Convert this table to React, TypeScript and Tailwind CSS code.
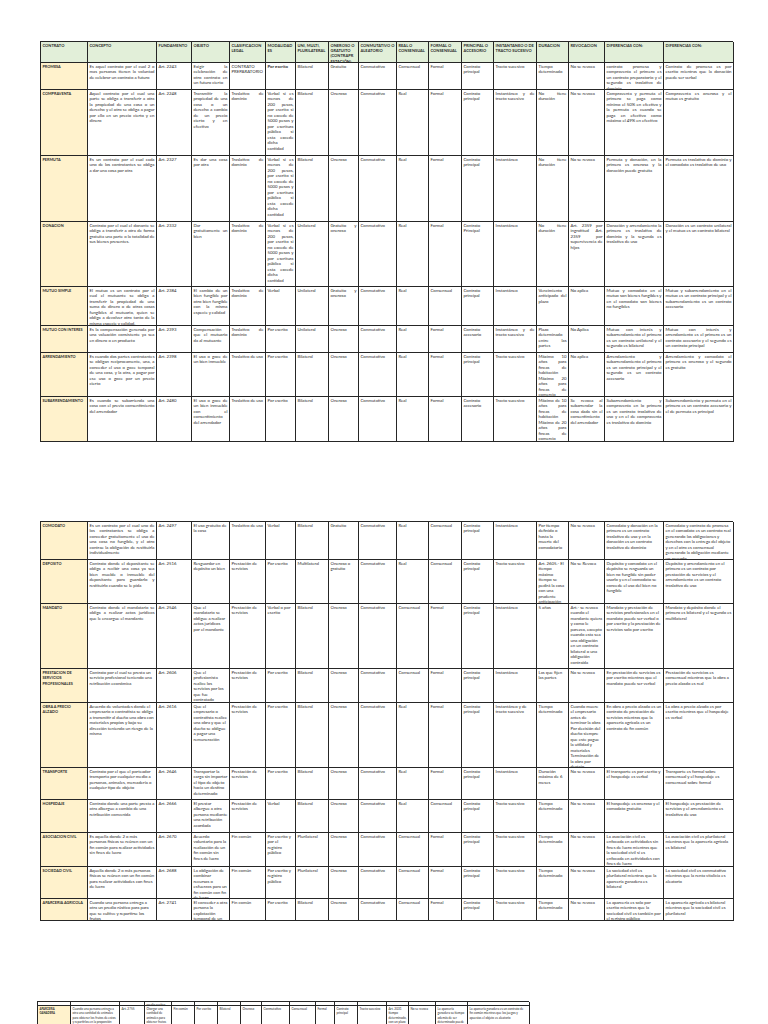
import React from "react";

type Row = { h: string; cells: string[]; plain?: boolean; jc?: number[] };

const MAIN_COLS =
    "grid-cols-[47px_69px_35px_38px_36px_30px_33px_30px_38px_32px_33px_32px_43px_32px_36px_59px_70px]";
const SMALL_COLS =
    "grid-cols-[33px_49px_25px_27px_23px_23px_23px_21px_28px_26px_19px_23px_29px_22px_27px_32px_62px]";

const MODAL_LARGA =
    "Verbal si es menos de 200 pesos, por escrito si no excede de 5000 pesos y por escritura pública si esta excede dicha cantidad";

const header: string[] = [
    "CONTRATO",
    "CONCEPTO",
    "FUNDAMENTO",
    "OBJETO",
    "CLASIFICACION LEGAL",
    "MODALIDAD\u200BES",
    "UNI, MULTI, PLURILATERAL",
    "ONEROSO O GRATUITO (CONTRAPR\u200BESTACIÓN)",
    "CONMUTATIVO O ALEATORIO",
    "REAL O CONSENSUAL",
    "FORMAL O CONSENSUAL",
    "PRINCIPAL O ACCESORIO",
    "INSTANTANEO O DE TRACTO SUCESIVO",
    "DURACION",
    "REVOCACION",
    "DIFERENCIAS CON:",
    "DIFERENCIAS CON:",
];

const topRows: Row[] = [
    {
        h: "h-[27px]",
        cells: [
            "Promesa",
            "Es aquel contrato por el cual 2 o mas personas tienen la voluntad de celebrar un contrato a futuro",
            "Art. 2243",
            "Exigir la celebración de otro contrato en un futuro cierto",
            "CONTRATO PREPARATORIO",
            "**Por escrito",
            "Bilateral",
            "Gratuito",
            "Conmutativo",
            "Consensual",
            "Formal",
            "Contrato principal",
            "Tracto sucesivo",
            "Tiempo determinado",
            "No se revoca",
            "contrato promesa y compraventa el primero es un contrato preparatorio y el segundo es traslativo de dominio",
            "Contrato de promesa es por escrito mientras que la donación puede ser verbal",
        ],
    },
    {
        h: "h-[66px]",
        cells: [
            "Compraventa",
            "Aquel contrato por el cual una parte se obliga a transferir a otra la propiedad de una cosa o un derecho y el otro se obliga a pagar por ello en un precio cierto y en dinero",
            "Art. 2248",
            "Transmitir la propiedad de una cosa o un derecho a cambio de un precio cierto y en efectivo",
            "Traslativo de dominio",
            MODAL_LARGA,
            "Bilateral",
            "Oneroso",
            "Conmutativo",
            "Real",
            "Formal",
            "Contrato principal",
            "Instantáneo y de tracto sucesivo",
            "No tiene duración",
            "No se revoca",
            "Compraventa y permuta el primero se paga como mínimo el 50% en efectivo y la permuta es cuando se paga en efectivo como máximo el 49% en efectivo",
            "Compraventa es onerosa y el mutuo es gratuito",
        ],
    },
    {
        h: "h-[66px]",
        cells: [
            "Permuta",
            "Es un contrato por el cual cada uno de los contratantes se obliga a dar una cosa por otra",
            "Art. 2327",
            "Es dar una cosa por otra",
            "Traslativo de dominio",
            MODAL_LARGA,
            "Bilateral",
            "Oneroso",
            "Conmutativo",
            "Real",
            "Formal",
            "Contrato principal",
            "Instantáneo",
            "No tiene duración",
            "No se revoca",
            "Permuta y donación, en la primera es onerosa y la donación puede gratuita",
            "Permuta es traslativo de dominio y el comodato es traslativo de uso",
        ],
    },
    {
        h: "h-[65px]",
        cells: [
            "Donacion",
            "Contrato por el cual el donante se obliga a transferir a otra de forma gratuita una parte o la totalidad de sus bienes presentes.",
            "Art. 2332",
            "Dar gratuitamente un bien",
            "Traslativo de dominio",
            MODAL_LARGA,
            "Unilateral",
            "Gratuito y oneroso",
            "Conmutativo",
            "Real",
            "Formal",
            "Contrato Principal",
            "Instantáneo",
            "No tiene duración",
            "Art. 2359 por ingratitud Art. 2359 por supervivencia de hijos",
            "Donación y arrendamiento la primera es traslativa de dominio y la segunda es traslativa de uso",
            "Donación es un contrato unilateral y el mutuo es un contrato bilateral",
        ],
    },
    {
        h: "h-[39px]",
        cells: [
            "Mutuo simple",
            "El mutuo es un contrato por el cual el mutuante se obliga a transferir la propiedad de una suma de dinero o de otras cosas fungibles al mutuario, quien se obliga a devolver otro tanto de la misma especie y calidad.",
            "Art. 2384",
            "El cambio de un bien fungible por otro bien fungible con la misma especie y calidad",
            "Traslativo de dominio",
            "Verbal",
            "Unilateral",
            "Gratuito y oneroso",
            "Conmutativo",
            "Real",
            "Consensual",
            "Contrato principal",
            "Instantáneo",
            "Vencimiento anticipado del plazo",
            "No aplica",
            "Mutuo y comodato en el mutuo son bienes fungibles y en el comodato son bienes no fungibles",
            "Mutuo y subarrendamiento en el mutuo es un contrato principal y el subarrendamiento es un contrato accesorio",
        ],
    },
    {
        h: "h-[27px]",
        cells: [
            "Mutuo con interes",
            "Es la compensación generada por una valuación consistente ya sea en dinero o en producto",
            "Art. 2393",
            "Compensación que el mutuario da al mutuante",
            "Traslativo de dominio",
            "Por escrito",
            "Unilateral",
            "Oneroso",
            "Conmutativo",
            "Real",
            "Formal",
            "Contrato accesorio",
            "Instantáneo y de tracto sucesivo",
            "Plazo determinado entre las partes",
            "No Aplica",
            "Mutuo con interés y subarrendamiento el primero es un contrato unilateral y el segundo es bilateral",
            "Mutuo con interés y arrendamiento es el primero es un contrato accesorio y el segundo es un contrato principal",
        ],
    },
    {
        h: "h-[44px]",
        cells: [
            "Arrendamiento",
            "Es cuando dos partes contratantes se obligan recíprocamente, una, a conceder el uso o goce temporal de una cosa, y la otra, a pagar por ese uso o goce por un precio cierto",
            "Art. 2398",
            "El uso o goce de un bien inmueble",
            "Traslativo de uso",
            "Por escrito",
            "Bilateral",
            "Oneroso",
            "Conmutativo",
            "Real",
            "Formal",
            "Contrato principal",
            "Tracto sucesivo",
            "Máximo 10 años para fincas de habitación Máximo 20 años para fincas de comercio",
            "No aplica",
            "Arrendamiento y subarrendamiento el primero es un contrato principal y el segundo es un contrato accesorio",
            "Arrendamiento y comodato el primero es oneroso y el segundo es gratuito",
        ],
    },
    {
        h: "h-[45px]",
        cells: [
            "Subarrendamiento",
            "Es cuando se subarrienda una cosa con el previo consentimiento del arrendador",
            "Art. 2480",
            "El uso o goce de un bien inmueble con el consentimiento del arrendador",
            "Traslativo de uso",
            "Por escrito",
            "Bilateral",
            "Oneroso",
            "Conmutativo",
            "Real",
            "Formal",
            "Contrato accesorio",
            "Tracto sucesivo",
            "Máximo de 10 años para fincas de habitación Máximo de 20 años para fincas de comercio",
            "Se revoca al subarrendar la cosa dada sin el consentimiento del arrendador",
            "Subarrendamiento y compraventa en lo primero es un contrato traslativo de uso y en el de compraventa es traslativo de dominio",
            "Subarrendamiento y permuta en el primero es un contrato accesorio y el de permuta es principal",
        ],
    },
];

const midRows: Row[] = [
    {
        h: "h-[38px]",
        jc: [1],
        cells: [
            "Comodato",
            "Es un contrato por el cual uno de los contratantes se obliga a conceder gratuitamente el uso de una cosa no fungible, y el otro contrae la obligación de restituirla individualmente",
            "Art. 2497",
            "El uso gratuito de la cosa",
            "Traslativo de uso",
            "Verbal",
            "Bilateral",
            "Gratuito",
            "Conmutativo",
            "Real",
            "Consensual",
            "Contrato principal",
            "Instantáneo",
            "Por tiempo definido o hasta la muerte del comodatario",
            "No se revoca",
            "Comodato y donación en la primera es un contrato traslativo de uso y en la donación es un contrato traslativo de dominio",
            "Comodato y contrato de promesa en el comodato es un contrato real generando las obligaciones y derechos con la entrega del objeto y en el otro es consensual generando la obligación mediante un acuerdo",
        ],
    },
    {
        h: "h-[44px]",
        jc: [1],
        cells: [
            "Deposito",
            "Contrato donde el depositante se obliga a recibir una cosa ya sea bien mueble o inmueble del depositante para guardarlo y restituirlo cuando se le pida",
            "Art. 2516",
            "Resguardar en depósito un bien",
            "Prestación de servicios",
            "Por escrito",
            "Multilateral",
            "Oneroso o gratuito",
            "Conmutativo",
            "Real",
            "Consensual",
            "Contrato principal",
            "Tracto sucesivo",
            "Art. 2605.- El tiempo máximo tiempo se pedirá la cosa con una prudente anticipación",
            "No se Revoca",
            "Depósito y comodato en el depósito se resguarda un bien no fungible sin poder usarlo y en el comodato se concede el uso del bien no fungible",
            "Depósito y arrendamiento en el primero es un contrato por prestación de servicios y el arrendamiento es un contrato traslativo de uso",
        ],
    },
    {
        h: "h-[65px]",
        jc: [1],
        cells: [
            "Mandato",
            "Contrato donde el mandatario se obliga a realizar actos jurídicos que le encargue el mandante",
            "Art. 2546",
            "Que el mandatario se obligue a realizar actos jurídicos por el mandante",
            "Prestación de servicios",
            "Verbal o por escrito",
            "Bilateral",
            "Oneroso",
            "Conmutativo",
            "Consensual",
            "Formal",
            "Contrato principal",
            "Instantáneo",
            "5 años",
            "Art.- se revoca cuando el mandante quiera y como le parezca, excepto cuando esta sea una obligación en un contrato bilateral o una obligación contraída",
            "Mandato y prestación de servicios profesionales en el mandato puede ser verbal o por escrito y la prestación de servicios solo por escrito",
            "Mandato y depósito donde el primero es bilateral y el segundo es multilateral",
        ],
    },
    {
        h: "h-[34px]",
        cells: [
            "Prestacion de servicios profesionales",
            "Contrato por el cual se presta un servicio profesional teniendo una retribución económica",
            "Art. 2606",
            "Que el profesionista realice los servicios por los que fue contratado",
            "Prestación de servicios",
            "Por escrito",
            "Bilateral",
            "Oneroso",
            "Conmutativo",
            "Consensual",
            "Formal",
            "Contrato principal",
            "Instantáneo",
            "Las que fijen las partes",
            "No se revoca",
            "En prestación de servicios es por escrito mientras que el mandato puede ser verbal",
            "Prestación de servicios es consensual mientras que la obra a precio alzado es real",
        ],
    },
    {
        h: "h-[65px]",
        cells: [
            "Obra a precio alzado",
            "Acuerdo de voluntades donde el empresario o contratista se obliga a transmitir al dueño una obra con materiales propios y bajo su dirección teniendo un riesgo de la misma",
            "Art. 2616",
            "Que el empresario o contratista realice una obra y que el dueño se obligue a pagar una remuneración",
            "Prestación de servicios",
            "Por escrito",
            "Bilateral",
            "Oneroso",
            "Conmutativo",
            "Real",
            "Formal",
            "Contrato principal",
            "Instantáneo y de tracto sucesivo",
            "Tiempo determinado",
            "Cuando muere el empresario antes de terminar la obra Por decisión del dueño siempre que este pague la utilidad y materiales Terminación de la obra por destajo",
            "En obra a precio alzado es un contrato de prestación de servicios mientras que la aparcería agrícola es un contrato de fin común",
            "La obra a precio alzado es por escrito mientras que el hospedaje es verbal",
        ],
    },
    {
        h: "h-[32px]",
        cells: [
            "Transporte",
            "Contrato por el que el porteador transporta por cualquier medio a personas, animales, mercadería o cualquier tipo de objeto",
            "Art. 2646",
            "Transportar la carga sin importar el tipo de objeto hacia un destino determinado",
            "Prestación de servicios",
            "Por escrito",
            "Bilateral",
            "Oneroso",
            "Conmutativo",
            "Real",
            "Formal",
            "Contrato principal",
            "Instantáneo",
            "Duración máxima de 6 meses",
            "No se revoca",
            "El transporte es por escrito y el hospedaje es verbal",
            "Transporte es formal sobre consensual y el hospedaje es consensual sobre formal",
        ],
    },
    {
        h: "h-[33px]",
        cells: [
            "Hospedaje",
            "Contrato donde una parte presta a otra albergue a cambio de una retribución convenida",
            "Art. 2666",
            "El prestar albergue a otra persona mediante una retribución acordada",
            "Prestación de servicios",
            "Verbal",
            "Bilateral",
            "Oneroso",
            "Conmutativo",
            "Real",
            "Consensual",
            "Contrato principal",
            "Tracto sucesivo",
            "Tiempo determinado",
            "No se revoca",
            "El hospedaje es oneroso y el comodato gratuito",
            "El hospedaje es prestación de servicios y el arrendamiento es traslativo de uso",
        ],
    },
    {
        h: "h-[34px]",
        cells: [
            "Asociacion civil",
            "Es aquella donde 2 o más personas físicas se reúnen con un fin común para realizar actividades sin fines de lucro",
            "Art. 2670",
            "Acuerdo voluntario para la realización de un fin común sin fines de lucro",
            "Fin común",
            "Por escrito y por el registro público",
            "Plurilateral",
            "Oneroso",
            "Conmutativo",
            "Consensual",
            "Formal",
            "Contrato principal",
            "Tracto sucesivo",
            "Tiempo determinado",
            "No se revoca",
            "La asociación civil es enfocada en actividades sin fines de lucro mientras que la sociedad civil sí es enfocada en actividades con fines de lucro",
            "La asociación civil es plurilateral mientras que la aparcería agrícola es bilateral",
        ],
    },
    {
        h: "h-[32px]",
        cells: [
            "Sociedad civil",
            "Aquella donde 2 o más personas físicas se reúnen con un fin común para realizar actividades con fines de lucro",
            "Art. 2688",
            "La obligación de combinar recursos o esfuerzos para un fin común con fin de lucro",
            "Fin común",
            "Por escrito y registro público",
            "Plurilateral",
            "Oneroso",
            "Conmutativo",
            "Consensual",
            "Formal",
            "Contrato principal",
            "Tracto sucesivo",
            "Tiempo determinado",
            "No se revoca",
            "La sociedad civil es plurilateral mientras que la aparcería ganadera es bilateral",
            "La sociedad civil es conmutativo mientras que la renta vitalicia es aleatorio",
        ],
    },
    {
        h: "h-[22px]",
        cells: [
            "Aparceria agricola",
            "Cuando una persona entrega a otra un predio rústico para para que se cultive y repartirse los frutos",
            "Art. 2741",
            "El conceder a otra persona la explotación temporal de un",
            "Fin común",
            "Por escrito",
            "Bilateral",
            "Oneroso",
            "Conmutativo",
            "Consensual",
            "Formal",
            "Contrato principal",
            "Tracto sucesivo",
            "Tiempo determinado",
            "No se revoca",
            "La aparcería es solo por escrito mientras que la sociedad civil es también por el registro público",
            "La aparcería agrícola es bilateral mientras que la sociedad civil es plurilateral",
        ],
    },
];

const lastRows: Row[] = [
    {
        h: "h-[4px]",
        plain: true,
        cells: ["", "", "", "predio rustico", "", "", "", "", "", "", "", "", "", "", "", "", ""],
    },
    {
        h: "h-[40px]",
        cells: [
            "Aparceria ganadera",
            "Cuando una persona entrega a otra una cantidad de animales para obtener los frutos de estos y repartirlos en la proporción convenida",
            "Art. 2755",
            "Otorgar una cantidad de animales para obtener frutos",
            "Fin común",
            "Por escrito",
            "Bilateral",
            "Oneroso",
            "Conmutativo",
            "Consensual",
            "Formal",
            "Contrato principal",
            "Tracto sucesivo",
            "Art. 2031 tiempo determinado, con un plazo",
            "No se revoca",
            "La aparcería ganadera su tiempo además de ser determinado puede ser por costumbre",
            "La aparcería ganadera es un contrato de fin común mientras que los juegos y apuestas el objeto es aleatorio",
        ],
    },
];

function Cell({
    text,
    first,
    head,
    plain,
    justify,
    firstText,
}: {
    text: string;
    first: boolean;
    head: boolean;
    plain?: boolean;
    justify: boolean;
    firstText?: string;
}) {
    const bold = text.startsWith("**");
    const value = bold ? text.slice(2) : text;
    let tone = "bg-white";
    if (head) tone = "bg-[#e2efd9] font-bold uppercase [overflow-wrap:anywhere]";
    else if (first && !plain) tone = `bg-[#fff2cc] font-bold uppercase ${firstText}`;
    return (
        <div
            className={`overflow-hidden border-r border-b border-[#262626] px-[1.5px] pt-[1px] ${tone} ${
                justify && !head && !first ? "text-justify" : "text-left"
            } ${bold ? "font-bold" : ""}`}
        >
            {value}
        </div>
    );
}

function ContractTable({
    rows,
    cols,
    width,
    text,
    firstText,
    headText,
    withHeader,
    justify,
    className,
}: {
    rows: Row[];
    cols: string;
    width: string;
    text: string;
    firstText: string;
    headText?: string;
    withHeader?: boolean;
    justify: boolean;
    className: string;
}) {
    return (
        <div className={`flex flex-col border-t border-l border-[#262626] ${width} ${className}`}>
            {withHeader && (
                <div className={`grid h-[21px] ${cols} ${headText}`}>
                    {header.map((t, i) => (
                        <Cell key={i} text={t} first={i === 0} head justify={false} />
                    ))}
                </div>
            )}
            {rows.map((r, ri) => (
                <div key={ri} className={`grid ${r.h} ${cols} ${text}`}>
                    {r.cells.map((t, i) => (
                        <Cell
                            key={i}
                            text={t}
                            first={i === 0}
                            head={false}
                            plain={r.plain}
                            justify={justify || (r.jc ?? []).includes(i)}
                            firstText={firstText}
                        />
                    ))}
                </div>
            ))}
        </div>
    );
}

export default function App() {
    return (
        <div className="min-h-[1024px] w-[768px] bg-white pt-[41px] pb-10 font-['Lato','Liberation_Sans',sans-serif] text-[#2a2a2a]">
            <ContractTable
                rows={topRows}
                cols={MAIN_COLS}
                width="w-[693px]"
                text="text-[4.3px] leading-[5.45px]"
                firstText="text-[3.8px]"
                headText="text-[4px] leading-[5.2px]"
                withHeader
                justify
                className="ml-[40px]"
            />
            <ContractTable
                rows={midRows}
                cols={MAIN_COLS}
                width="w-[693px]"
                text="text-[4.3px] leading-[5.45px]"
                firstText="text-[3.8px]"
                justify={false}
                className="ml-[40px] mt-[79px]"
            />
            <ContractTable
                rows={lastRows}
                cols={SMALL_COLS}
                width="w-[492px]"
                text="text-[3.1px] leading-[4.3px]"
                firstText="text-[2.8px]"
                justify={false}
                className="ml-[37px] mt-[80px]"
            />
        </div>
    );
}
